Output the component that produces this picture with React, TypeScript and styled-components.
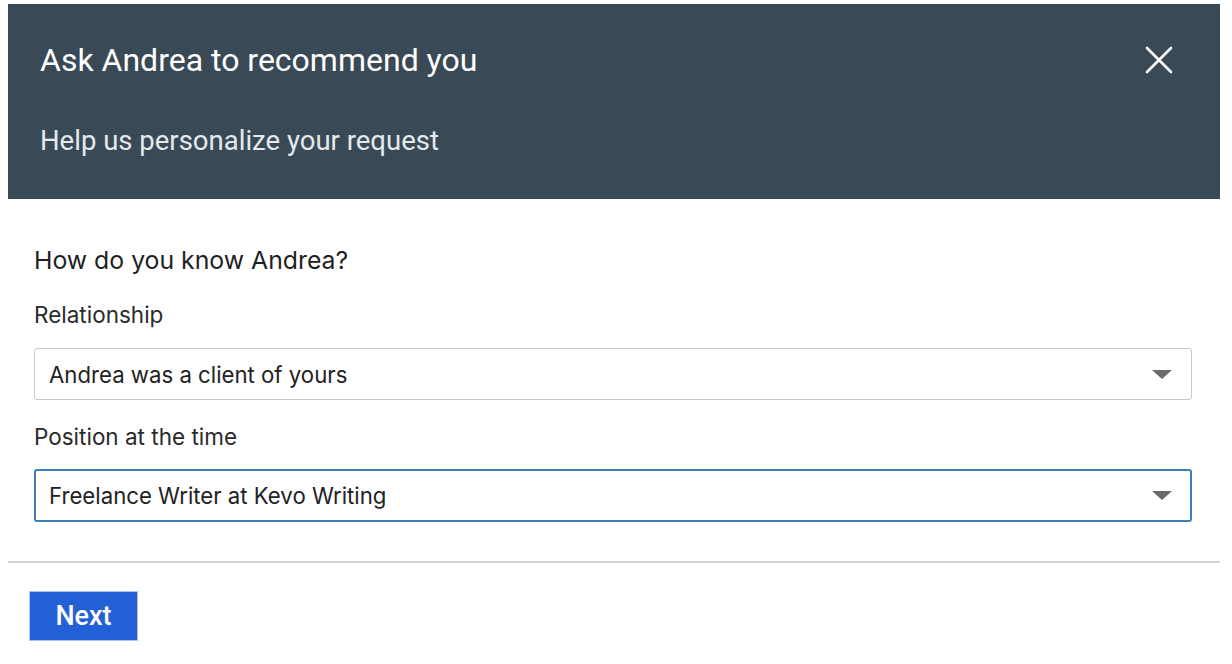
import React from "react";
import styled, { createGlobalStyle } from "styled-components";

const Global = createGlobalStyle`
  html, body { margin: 0; padding: 0; background: #ffffff; }
  body { width: 1232px; height: 664px; overflow: hidden; }
`;

const Page = styled.div`
  padding: 4px 12px 0 8px;
  display: flex;
  flex-direction: column;
`;

const Header = styled.header`
  background: #394956;
  height: 195px;
  display: flex;
  flex-direction: column;
  padding: 0 32px;
  position: relative;
  font-family: Roboto, "Liberation Sans", sans-serif;
  color: #ffffff;
`;

const Title = styled.h1`
  margin: 36px 0 0;
  font-size: 32px;
  font-weight: 400;
  line-height: 40px;
`;

const Subtitle = styled.p`
  margin: 43px 0 0;
  font-size: 27.5px;
  font-weight: 400;
  line-height: 36px;
  color: #e6e9ec;
`;

const CloseButton = styled.button`
  position: absolute;
  top: 41px;
  right: 46px;
  width: 30px;
  height: 30px;
  padding: 0;
  border: none;
  background: transparent;
  display: flex;
  align-items: center;
  justify-content: center;
  cursor: pointer;
`;

const Body = styled.section`
  padding: 45px 28px 0 26px;
  display: flex;
  flex-direction: column;
  font-family: Inter, "Noto Sans", sans-serif;
  color: #222;
`;

const Question = styled.h2`
  margin: 0;
  font-size: 24.8px;
  font-weight: 400;
  line-height: 32px;
  color: #1f1f1f;
`;

const Label = styled.label<{ $top: number }>`
  margin-top: ${(p) => p.$top}px;
  font-size: 22.5px;
  line-height: 28px;
  color: #2a2a2a;
`;

const Select = styled.div<{ $focused?: boolean }>`
  margin-top: ${(p) => (p.$focused ? 18 : 19)}px;
  height: ${(p) => (p.$focused ? 53 : 52)}px;
  box-sizing: border-box;
  border: ${(p) => (p.$focused ? "2px solid #3a7fb8" : "1px solid #c9c9c9")};
  border-radius: 3px;
  display: flex;
  align-items: center;
  justify-content: space-between;
  padding: 0 ${(p) => (p.$focused ? 18 : 19)}px 0 ${(p) => (p.$focused ? 13 : 14)}px;
  font-size: 22.2px;
  color: #222;
`;

const Arrow = styled.span`
  width: 0;
  height: 0;
  border-left: 10px solid transparent;
  border-right: 10px solid transparent;
  border-top: 9px solid #6b6b6b;
`;

const Divider = styled.hr`
  margin: 39px 0 0;
  border: none;
  border-top: 2px solid #d3d3d3;
`;

const Footer = styled.footer`
  padding: 28px 0 0 21px;
`;

const NextButton = styled.button`
  width: 109px;
  height: 50px;
  background: #2360d6;
  border: 1px solid #a9c3ee;
  color: #fff;
  font-family: Roboto, "Liberation Sans", sans-serif;
  font-size: 27px;
  font-weight: 500;
  cursor: pointer;
`;

export default function App() {
  return (
    <>
      <Global />
      <Page>
        <Header>
          <Title>Ask Andrea to recommend you</Title>
          <Subtitle>Help us personalize your request</Subtitle>
          <CloseButton aria-label="Close">
            <svg width="28" height="28" viewBox="0 0 28 28">
              <path d="M2 2 L26 26 M26 2 L2 26" stroke="#fff" strokeWidth="2.6" strokeLinecap="round" />
            </svg>
          </CloseButton>
        </Header>
        <Body>
          <Question>How do you know Andrea?</Question>
          <Label $top={25}>Relationship</Label>
          <Select>
            <span>Andrea was a client of yours</span>
            <Arrow />
          </Select>
          <Label $top={23}>Position at the time</Label>
          <Select $focused>
            <span>Freelance Writer at Kevo Writing</span>
            <Arrow />
          </Select>
        </Body>
        <Divider />
        <Footer>
          <NextButton>Next</NextButton>
        </Footer>
      </Page>
    </>
  );
}
